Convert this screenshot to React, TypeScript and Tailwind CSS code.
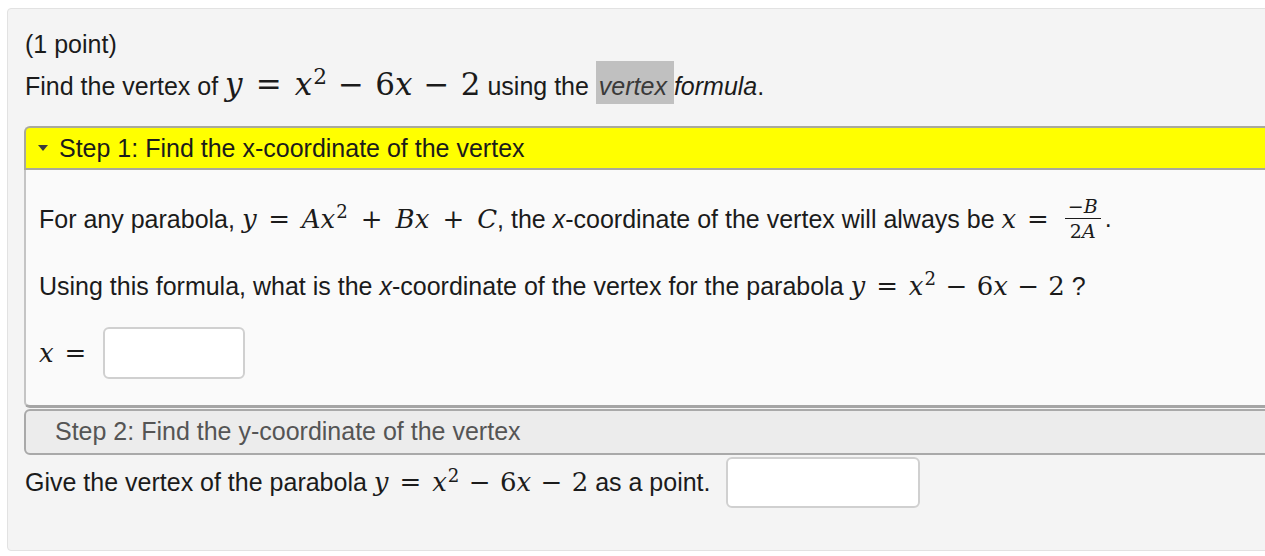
import React from "react";

// WeBWorK-style problem card: prompt, an open yellow step, a closed grey step,
// and the final answer row.
const sans = "font-['Liberation_Sans',Arial,sans-serif]";
const serif = "font-['DejaVu_Serif','Liberation_Serif',serif]";

function V({ children }: { children: React.ReactNode }) {
  return <span className="italic">{children}</span>;
}

function Op({ children, space = "mx-[0.36em]" }: { children: React.ReactNode; space?: string }) {
  return <span className={space}>{children}</span>;
}

function Sq() {
  return <sup className="ml-[1px] text-[0.7em]">2</sup>;
}

function Quad({ size }: { size: string }) {
  return (
    <span className={`${serif} whitespace-nowrap ${size}`}>
      <V>y</V>
      <Op space="mx-[0.42em]">=</Op>
      <V>x</V>
      <Sq />
      <Op>−</Op>6<V>x</V>
      <Op>−</Op>2
    </span>
  );
}

function AnswerBox({ className }: { className: string }) {
  return (
    <input
      type="text"
      className={`rounded-[6px] border-2 border-[#d0d0d0] bg-white outline-none ${className}`}
    />
  );
}

export default function App() {
  return (
    <div className={`${sans} h-[556px] w-full overflow-hidden bg-white pl-[7px] pt-[8px] text-[25px] text-[#1b1b1b]`}>
      <div className="h-[543px] w-[1300px] rounded-[4px] border border-[#e2e2e2] bg-[#f4f4f4] pl-[17px] pt-[21px]">
        <p className="h-[28px] leading-[28px]">(1 point)</p>
        <p className="mt-[12px] h-[28px] whitespace-nowrap leading-[28px]">
          Find the vertex of <Quad size="text-[31px]" /> using the{" "}
          <span className="bg-[#c0c0c0] pb-[4px] pl-[3px] pt-[11px] italic text-[#3a3a3a]">vertex </span>
          <i>formula</i>.
        </p>

        <div className="-ml-px mt-[28px]">
          <div className="flex h-[44px] items-center rounded-tl-[6px] border-y-2 border-l-2 border-[#a9a99c] bg-[#ffff00] pl-[11px]">
            <svg width="12" height="8" viewBox="0 0 12 8" className="mr-[10px]">
              <path d="M1 1 L11 1 L6 7 Z" fill="#3c3c3c" />
            </svg>
            <span className="leading-[28px]">Step 1: Find the x-coordinate of the vertex</span>
          </div>
          <div className="rounded-bl-[6px] border-b-[3px] border-l-2 border-b-[#a5a5a5] border-l-[#c4c4c4] bg-[#fafafa] pb-[26px] pl-[13px] pt-[33px]">
            <div className="flex h-[32px] items-center whitespace-nowrap">
              <span>
                For any parabola,{" "}
                <span className={`${serif} text-[26px]`}>
                  <V>y</V>
                  <Op space="mx-[0.45em]">=</Op>
                  <V>Ax</V>
                  <Sq />
                  <Op space="mx-[0.5em]">+</Op>
                  <V>Bx</V>
                  <Op space="mx-[0.5em]">+</Op>
                  <V>C</V>
                </span>
                , the <i>x</i>-coordinate of the vertex will always be{" "}
                <span className={`${serif} text-[26px]`}>
                  <V>x</V>
                  <Op space="mx-[0.42em]">=</Op>
                </span>
              </span>
              <span className={`${serif} ml-[5px] inline-flex flex-col items-center text-[19px] leading-[19px]`}>
                <span className="px-[3px] pb-[2px]">
                  −<V>B</V>
                </span>
                <span className="h-[1.5px] w-full bg-[#1b1b1b]" />
                <span className="px-[3px] pt-[3px]">
                  2<V>A</V>
                </span>
              </span>
              <span className="ml-[4px]">.</span>
            </div>
            <div className="mt-[35px] flex h-[32px] items-center whitespace-nowrap">
              <span>
                Using this formula, what is the <i>x</i>-coordinate of the vertex for the parabola{" "}
                <Quad size="text-[26px]" /> ?
              </span>
            </div>
            <div className="mt-[25px] flex items-center">
              <span className={`${serif} text-[26px]`}>
                <V>x</V>
                <Op space="mx-[0.42em]">=</Op>
              </span>
              <AnswerBox className="ml-[6px] h-[52px] w-[142px]" />
            </div>
          </div>
        </div>

        <div className="-ml-px mt-px flex h-[46px] items-center rounded-[6px] border-2 border-[#a9a9a9] bg-[#ececec] pl-[29px] text-[#555]">
          Step 2: Find the y-coordinate of the vertex
        </div>

        <div className="mt-[2px] flex items-center whitespace-nowrap">
          <span>
            Give the vertex of the parabola <Quad size="text-[26px]" /> as a point.
          </span>
          <AnswerBox className="ml-[15px] h-[51px] w-[194px]" />
        </div>
      </div>
    </div>
  );
}
